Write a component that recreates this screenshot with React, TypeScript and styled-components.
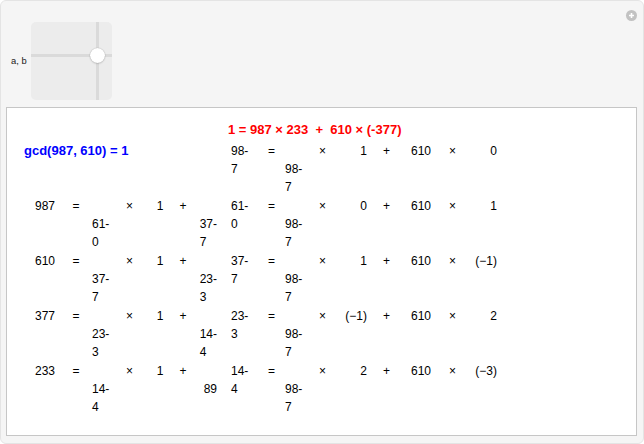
import React from "react";
import styled, { createGlobalStyle } from "styled-components";

const Global = createGlobalStyle`
  html, body { margin: 0; padding: 0; background: #ffffff; }
  body { font-family: "Liberation Sans", Arial, sans-serif; }
`;

const TEMPLATE =
  "11px 25px 32px 17px 41px 20px 26px 21px 14px 27px 27px 20px 35px 27px 9px 21px 14px 29px 25px 32px";

const Frame = styled.div`
  position: relative;
  box-sizing: border-box;
  width: 644px;
  height: 444px;
  background: #f5f5f5;
  border: 1px solid #e4e4e4;
  border-radius: 6px;
  overflow: hidden;
`;

const Controls = styled.div`
  display: flex;
  align-items: center;
  gap: 4px;
  padding: 21px 0 0 10px;
  height: 78px;
`;

const Label = styled.span`
  font-size: 9.4px;
  color: #222;
  line-height: 1;
`;

const Pad = styled.div`
  position: relative;
  width: 81px;
  height: 78px;
  background: #ececec;
  border-radius: 5px;
`;

const VLine = styled.div`
  position: absolute;
  left: 65px;
  top: 0;
  bottom: 0;
  width: 3px;
  background: #dadada;
`;

const HLine = styled.div`
  position: absolute;
  left: 0;
  right: 0;
  top: 31.5px;
  height: 3px;
  background: #dadada;
`;

const Knob = styled.div`
  position: absolute;
  left: 59px;
  top: 25.5px;
  width: 15px;
  height: 15px;
  border-radius: 50%;
  background: #ffffff;
  box-shadow: 0 0 1px rgba(0, 0, 0, 0.35), 0 1px 2px rgba(0, 0, 0, 0.12);
`;

const AddButton = styled.div`
  position: absolute;
  right: 6px;
  top: 9px;
  width: 11px;
  height: 11px;
  border-radius: 50%;
  background: #c2c2c2;
  display: flex;
  align-items: center;
  justify-content: center;
`;

const Panel = styled.div`
  box-sizing: border-box;
  margin: 7px 0 0 5px;
  width: 631px;
  height: 329px;
  background: #ffffff;
  border: 1px solid #c6c6c6;
  padding: 12.8px 0 0 17px;
`;

const Title = styled.div`
  padding-left: 204px;
  color: #ff0000;
  font-weight: bold;
  font-size: 13px;
  line-height: 18.33px;
  white-space: pre;
  margin-bottom: 2.7px;
`;

const Row = styled.div`
  display: grid;
  grid-template-columns: ${TEMPLATE};
  height: 55px;
  font-size: 12px;
  line-height: 18.33px;
  color: #000;
`;

const Cell = styled.div<{ $col: number; $align?: "start" | "center" | "end"; $drop?: boolean }>`
  grid-column: ${(p) => p.$col};
  justify-self: ${(p) => p.$align ?? "center"};
  align-self: start;
  padding-top: ${(p) => (p.$drop ? "18.33px" : "0")};
  white-space: nowrap;
  display: flex;
  flex-direction: column;
`;

const Gcd = styled.div`
  grid-column: 1 / span 8;
  justify-self: start;
  color: #0000ff;
  font-weight: bold;
  font-size: 13px;
  line-height: 18.33px;
  white-space: nowrap;
`;

const Line = styled.span`
  display: block;
`;

type Wrapped = string[];

const Wrap = ({ col, lines, drop, align = "start" }: { col: number; lines: Wrapped; drop?: boolean; align?: "start" | "center" | "end" }) => (
  <Cell $col={col} $align={align} $drop={drop}>
    {lines.map((l, i) => (
      <Line key={i}>{l}</Line>
    ))}
  </Cell>
);

type RowData = {
  a: string;
  c: Wrapped;
  e: string;
  g: Wrapped;
  h: Wrapped;
  l: string;
  p: string;
};

const rows: RowData[] = [
  { a: "987", c: ["61-", "0"], e: "1", g: ["37-", "7"], h: ["61-", "0"], l: "0", p: "1" },
  { a: "610", c: ["37-", "7"], e: "1", g: ["23-", "3"], h: ["37-", "7"], l: "1", p: "(\u22121)" },
  { a: "377", c: ["23-", "3"], e: "1", g: ["14-", "4"], h: ["23-", "3"], l: "(\u22121)", p: "2" },
  { a: "233", c: ["14-", "4"], e: "1", g: ["89"], h: ["14-", "4"], l: "2", p: "(\u22123)" },
];

const RightSide = ({ h, l, p }: { h: Wrapped; l: string; p: string }) => (
  <>
    <Wrap col={10} lines={h} />
    <Cell $col={11}>=</Cell>
    <Wrap col={12} lines={["98-", "7"]} drop />
    <Cell $col={13}>×</Cell>
    <Cell $col={14} $align="end">{l}</Cell>
    <Cell $col={16}>+</Cell>
    <Cell $col={18} $align="start">610</Cell>
    <Cell $col={19}>×</Cell>
    <Cell $col={20} $align="end">{p}</Cell>
  </>
);

export default function App() {
  return (
    <>
      <Global />
      <Frame>
        <Controls>
          <Label>a, b</Label>
          <Pad>
            <VLine />
            <HLine />
            <Knob />
          </Pad>
        </Controls>
        <AddButton>
          <svg width="7" height="7" viewBox="0 0 7 7">
            <path d="M3.5 1v5M1 3.5h5" stroke="#ffffff" strokeWidth="1.6" />
          </svg>
        </AddButton>
        <Panel>
          <Title>{"1 = 987 × 233  +  610 × (-377)"}</Title>
          <Row>
            <Gcd>gcd(987, 610) = 1</Gcd>
            <RightSide h={["98-", "7"]} l="1" p="0" />
          </Row>
          {rows.map((r) => (
            <Row key={r.a}>
              <Cell $col={2} $align="start">{r.a}</Cell>
              <Cell $col={3}>=</Cell>
              <Wrap col={4} lines={r.c} drop />
              <Cell $col={5}>×</Cell>
              <Cell $col={6}>{r.e}</Cell>
              <Cell $col={7}>+</Cell>
              <Wrap col={8} lines={r.g} drop align="end" />
              <RightSide h={r.h} l={r.l} p={r.p} />
            </Row>
          ))}
        </Panel>
      </Frame>
    </>
  );
}
